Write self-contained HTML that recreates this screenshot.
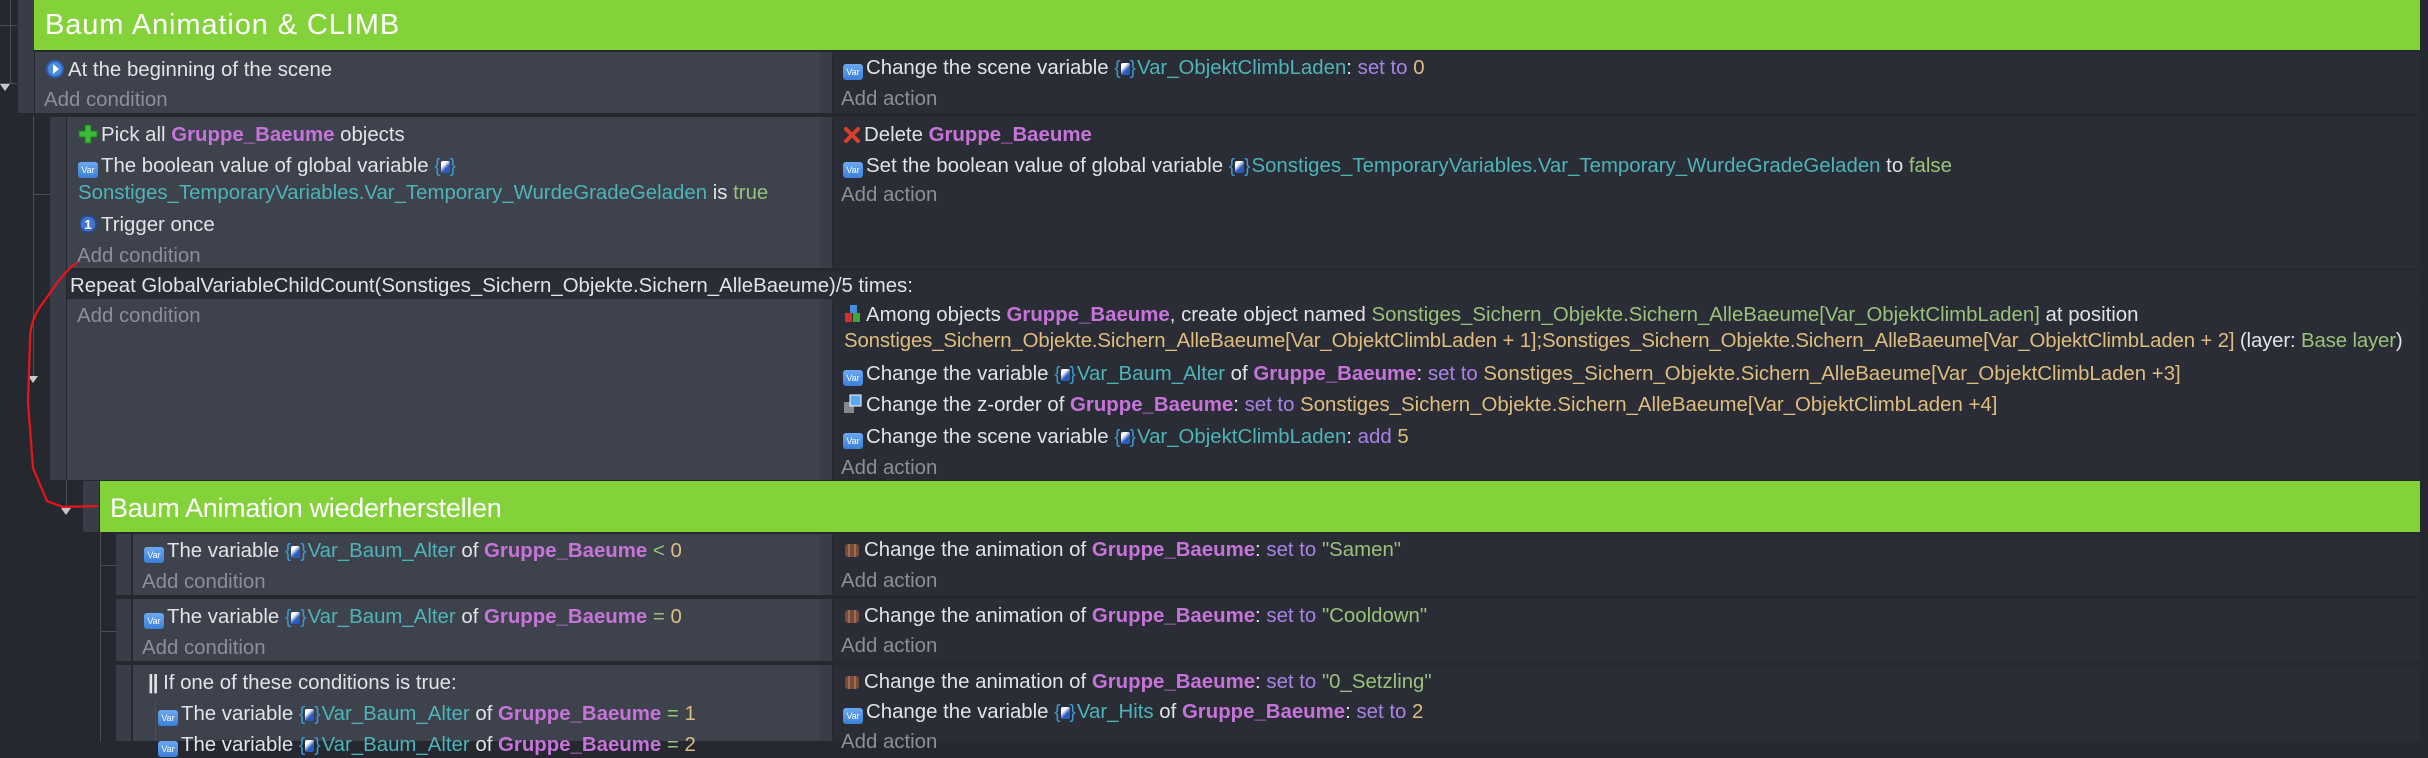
<!DOCTYPE html>
<html><head><meta charset="utf-8">
<style>
*{margin:0;padding:0;box-sizing:border-box}
html,body{width:2428px;height:741px;overflow:hidden;background:#25282f;font-family:"Liberation Sans",sans-serif;}
.a{position:absolute}
.r{position:absolute;background:#2a2d35}
.c{position:absolute;background:#3d424d}
.b{position:absolute;background:#393d47}
.g{position:absolute;background:#84d23a}
.h{position:absolute;color:#fff;font-size:29px;letter-spacing:0.6px;line-height:34px;white-space:nowrap}
.t{position:absolute;color:#e2e3e8;font-size:20.4px;line-height:24px;white-space:nowrap}
.ad{color:#8b8f98}
.p{color:#c674d9;font-weight:bold}
.v{color:#4db5b9}
.y{color:#dfbd7e}
.gr{color:#99c27a}
.s{color:#a983e6}
.ln{position:absolute;background:#4a4e58}
.var{display:inline-block;width:20px;height:16px;border-radius:3px;background:linear-gradient(#6aa8f0,#3a7fd8);color:#fff;font-size:9px;line-height:16px;text-align:center;vertical-align:-1px;margin-right:3px;letter-spacing:0}
.br{display:inline-block;color:#3a9ad0;font-size:19px;margin-right:1px}
.br i{display:inline-block;width:9px;height:12px;background:linear-gradient(135deg,#fff 30%,#2a5cc0 60%);border-radius:2px;vertical-align:-1px}
.ic{display:inline-block;vertical-align:-3px;margin-right:3px}
.tri{position:absolute;width:0;height:0;border-left:5px solid transparent;border-right:5px solid transparent;border-top:7px solid #c8c8c8}
</style></head><body>

<div class="ln a" style="left:10px;top:0;width:1px;height:83px"></div>
<div class="ln a" style="left:0;top:25px;width:17px;height:1px"></div>
<div class="ln a" style="left:0;top:83px;width:17px;height:1px"></div>
<div class="tri" style="left:0;top:84px"></div>

<div class="b" style="left:18px;top:0;width:16px;height:113px"></div>
<div class="g" style="left:34px;top:0;width:2386px;height:50px"></div>
<div class="h" style="left:45px;top:8px;letter-spacing:0.9px">Baum Animation &amp; CLIMB</div>

<div class="c" style="left:35px;top:52px;width:797px;height:61px"></div>
<div class="b" style="left:820px;top:52px;width:12px;height:61px"></div>
<div class="r" style="left:833px;top:52px;width:1587px;height:61px"></div>
<div class="t" style="left:45px;top:58px"><svg class="ic" width="20" height="20" viewBox="0 0 20 20"><circle cx="10" cy="10" r="9" fill="#2d5fb8"/><circle cx="10" cy="10" r="7" fill="#4d8ae0"/><path d="M8 5l6 5-6 5z" fill="#fff"/></svg>At the beginning of the scene</div>
<div class="t ad" style="left:44px;top:88px">Add condition</div>
<div class="t" style="left:843px;top:56px"><span class="var">Var</span>Change the scene variable <span class="br">{<i></i>}</span><span class="v">Var_ObjektClimbLaden</span>: <span class="s">set to</span> <span class="y">0</span></div>
<div class="t ad" style="left:841px;top:87px">Add action</div>

<div class="ln a" style="left:33px;top:116px;width:1px;height:262px"></div>
<div class="ln a" style="left:33px;top:194px;width:17px;height:1px"></div>
<div class="tri" style="left:28px;top:376px"></div>
<div class="b" style="left:50px;top:117px;width:16px;height:363px"></div>
<div class="c" style="left:67px;top:117px;width:765px;height:151px"></div>
<div class="b" style="left:820px;top:117px;width:12px;height:151px"></div>
<div class="r" style="left:833px;top:117px;width:1587px;height:151px"></div>
<div class="t" style="left:78px;top:123px"><svg class="ic" width="20" height="20" viewBox="0 0 20 20"><path d="M7 1h6v6h6v6h-6v6H7v-6H1V7h6z" fill="#3cb83c" stroke="#1d7a1d" stroke-width="1"/></svg>Pick all <span class="p">Gruppe_Baeume</span> objects</div>
<div class="t" style="left:78px;top:154px"><span class="var">Var</span>The boolean value of global variable <span class="br">{<i></i>}</span></div>
<div class="t v" style="left:78px;top:181px">Sonstiges_TemporaryVariables.Var_Temporary_WurdeGradeGeladen <span style="color:#e2e3e8">is</span> <span class="gr">true</span></div>
<div class="t" style="left:78px;top:213px"><svg class="ic" width="20" height="20" viewBox="0 0 20 20"><circle cx="10" cy="10" r="9" fill="#2a4f9a"/><circle cx="10" cy="10" r="7" fill="#4477cc"/><text x="10" y="15" font-size="13" font-weight="bold" fill="#fff" text-anchor="middle" font-family="Liberation Sans">1</text></svg>Trigger once</div>
<div class="t ad" style="left:77px;top:244px">Add condition</div>
<div class="t" style="left:843px;top:123px"><svg class="ic" width="18" height="18" viewBox="0 0 18 18"><path d="M3 3l12 12M15 3L3 15" stroke="#d8402a" stroke-width="4" stroke-linecap="round"/></svg>Delete <span class="p">Gruppe_Baeume</span></div>
<div class="t" style="left:843px;top:154px"><span class="var">Var</span>Set the boolean value of global variable <span class="br">{<i></i>}</span><span class="v">Sonstiges_TemporaryVariables.Var_Temporary_WurdeGradeGeladen</span> to <span class="gr">false</span></div>
<div class="t ad" style="left:841px;top:183px">Add action</div>

<div class="r" style="left:67px;top:271px;width:2353px;height:27px"></div>
<div class="t" style="left:70px;top:274px">Repeat GlobalVariableChildCount(Sonstiges_Sichern_Objekte.Sichern_AlleBaeume)/5 times:</div>
<div class="c" style="left:67px;top:299px;width:765px;height:181px"></div>
<div class="b" style="left:820px;top:299px;width:12px;height:181px"></div>
<div class="r" style="left:833px;top:299px;width:1587px;height:181px"></div>
<div class="t ad" style="left:77px;top:304px">Add condition</div>
<div class="t" style="left:843px;top:303px"><svg class="ic" width="20" height="20" viewBox="0 0 20 20"><rect x="7" y="1" width="7" height="8" fill="#4a8ae0"/><rect x="2" y="9" width="7" height="9" fill="#d03030"/><rect x="10" y="9" width="7" height="9" fill="#3aa83a"/></svg>Among objects <span class="p">Gruppe_Baeume</span>, create object named <span class="gr">Sonstiges_Sichern_Objekte.Sichern_AlleBaeume[Var_ObjektClimbLaden]</span> at position</div>
<div class="t y" style="left:844px;top:329px;letter-spacing:-0.15px">Sonstiges_Sichern_Objekte.Sichern_AlleBaeume[Var_ObjektClimbLaden + 1];Sonstiges_Sichern_Objekte.Sichern_AlleBaeume[Var_ObjektClimbLaden + 2] <span style="color:#e2e3e8">(layer: </span><span class="gr">Base layer</span><span style="color:#e2e3e8">)</span></div>
<div class="t" style="left:843px;top:362px"><span class="var">Var</span>Change the variable <span class="br">{<i></i>}</span><span class="v">Var_Baum_Alter</span> of <span class="p">Gruppe_Baeume</span>: <span class="s">set to</span> <span class="y">Sonstiges_Sichern_Objekte.Sichern_AlleBaeume[Var_ObjektClimbLaden +3]</span></div>
<div class="t" style="left:843px;top:393px"><svg class="ic" width="20" height="20" viewBox="0 0 20 20"><rect x="1" y="8" width="10" height="11" fill="#888"/><rect x="7" y="1" width="11" height="11" fill="#5aa8f0" stroke="#fff" stroke-width="1"/></svg>Change the z-order of <span class="p">Gruppe_Baeume</span>: <span class="s">set to</span> <span class="y">Sonstiges_Sichern_Objekte.Sichern_AlleBaeume[Var_ObjektClimbLaden +4]</span></div>
<div class="t" style="left:843px;top:425px"><span class="var">Var</span>Change the scene variable <span class="br">{<i></i>}</span><span class="v">Var_ObjektClimbLaden</span>: <span class="s">add</span> <span class="y">5</span></div>
<div class="t ad" style="left:841px;top:456px">Add action</div>

<div class="ln a" style="left:66px;top:480px;width:1px;height:30px"></div>
<div class="tri" style="left:61px;top:508px"></div>
<div class="b" style="left:83px;top:481px;width:16px;height:51px"></div>
<div class="g" style="left:100px;top:481px;width:2320px;height:51px"></div>
<div class="h" style="left:110px;top:491px;font-size:27px;letter-spacing:-0.3px">Baum Animation wiederherstellen</div>

<div class="ln a" style="left:100px;top:532px;width:1px;height:209px"></div>
<div class="ln a" style="left:100px;top:565px;width:16px;height:1px"></div>
<div class="ln a" style="left:100px;top:631px;width:16px;height:1px"></div>

<div class="b" style="left:116px;top:534px;width:15px;height:61px"></div>
<div class="c" style="left:133px;top:534px;width:699px;height:61px"></div>
<div class="b" style="left:820px;top:534px;width:12px;height:61px"></div>
<div class="r" style="left:833px;top:534px;width:1587px;height:61px"></div>
<div class="t" style="left:144px;top:539px"><span class="var">Var</span>The variable <span class="br">{<i></i>}</span><span class="v">Var_Baum_Alter</span> of <span class="p">Gruppe_Baeume</span> <span class="gr">&lt;</span> <span class="y">0</span></div>
<div class="t ad" style="left:142px;top:570px">Add condition</div>
<div class="t" style="left:843px;top:538px"><svg class="ic" width="18" height="18" viewBox="0 0 18 18"><rect x="2" y="3" width="14" height="13" rx="3" fill="#7a4a38"/><path d="M6 3v13M12 3v13" stroke="#a87a60" stroke-width="1.5"/></svg>Change the animation of <span class="p">Gruppe_Baeume</span>: <span class="s">set to</span> <span class="gr">"Samen"</span></div>
<div class="t ad" style="left:841px;top:569px">Add action</div>

<div class="b" style="left:116px;top:599px;width:15px;height:62px"></div>
<div class="c" style="left:133px;top:599px;width:699px;height:62px"></div>
<div class="b" style="left:820px;top:599px;width:12px;height:62px"></div>
<div class="r" style="left:833px;top:599px;width:1587px;height:62px"></div>
<div class="t" style="left:144px;top:605px"><span class="var">Var</span>The variable <span class="br">{<i></i>}</span><span class="v">Var_Baum_Alter</span> of <span class="p">Gruppe_Baeume</span> <span class="gr">=</span> <span class="y">0</span></div>
<div class="t ad" style="left:142px;top:636px">Add condition</div>
<div class="t" style="left:843px;top:604px"><svg class="ic" width="18" height="18" viewBox="0 0 18 18"><rect x="2" y="3" width="14" height="13" rx="3" fill="#7a4a38"/><path d="M6 3v13M12 3v13" stroke="#a87a60" stroke-width="1.5"/></svg>Change the animation of <span class="p">Gruppe_Baeume</span>: <span class="s">set to</span> <span class="gr">"Cooldown"</span></div>
<div class="t ad" style="left:841px;top:634px">Add action</div>

<div class="b" style="left:116px;top:665px;width:15px;height:76px"></div>
<div class="c" style="left:133px;top:665px;width:699px;height:76px"></div>
<div class="b" style="left:820px;top:665px;width:12px;height:76px"></div>
<div class="r" style="left:833px;top:665px;width:1587px;height:76px"></div>
<div class="ln a" style="left:155px;top:700px;width:1px;height:41px"></div>
<div class="t" style="left:148px;top:671px"><b style="letter-spacing:-1px">||</b> If one of these conditions is true:</div>
<div class="t" style="left:158px;top:702px"><span class="var">Var</span>The variable <span class="br">{<i></i>}</span><span class="v">Var_Baum_Alter</span> of <span class="p">Gruppe_Baeume</span> <span class="gr">=</span> <span class="y">1</span></div>
<div class="t" style="left:158px;top:733px"><span class="var">Var</span>The variable <span class="br">{<i></i>}</span><span class="v">Var_Baum_Alter</span> of <span class="p">Gruppe_Baeume</span> <span class="gr">=</span> <span class="y">2</span></div>
<div class="t" style="left:843px;top:670px"><svg class="ic" width="18" height="18" viewBox="0 0 18 18"><rect x="2" y="3" width="14" height="13" rx="3" fill="#7a4a38"/><path d="M6 3v13M12 3v13" stroke="#a87a60" stroke-width="1.5"/></svg>Change the animation of <span class="p">Gruppe_Baeume</span>: <span class="s">set to</span> <span class="gr">"0_Setzling"</span></div>
<div class="t" style="left:843px;top:700px"><span class="var">Var</span>Change the variable <span class="br">{<i></i>}</span><span class="v">Var_Hits</span> of <span class="p">Gruppe_Baeume</span>: <span class="s">set to</span> <span class="y">2</span></div>
<div class="t ad" style="left:841px;top:730px">Add action</div>

<svg class="a" style="left:0;top:0" width="200" height="741">
<path d="M78 262 L71 267 L60 279 L40 307 Q30 322 30 340 L28 402 L33 468 L47 501 L63 507 L98 506" fill="none" stroke="#e8141a" stroke-width="2.2"/>
</svg>
</body></html>
